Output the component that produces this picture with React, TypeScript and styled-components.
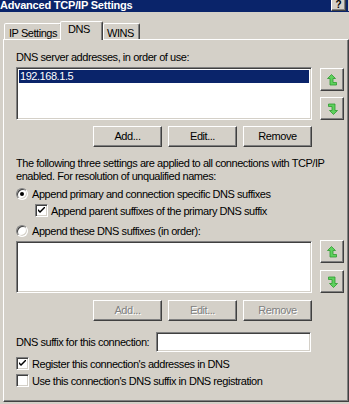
import React from 'react';
import styled, { createGlobalStyle, css } from 'styled-components';

const Global = createGlobalStyle`
  html, body { margin: 0; padding: 0; background: #d4d0c8; }
  body {
    font-family: "Liberation Sans", Arial, sans-serif;
    font-size: 11px;
    letter-spacing: -0.45px;
    color: #000;
  }
  * { box-sizing: border-box; }
`;

const Window = styled.div`
  width: 349px;
  height: 404px;
  overflow: hidden;
  background: #d4d0c8;
  display: flex;
  flex-direction: column;
`;

const TitleBar = styled.div`
  height: 12px;
  flex: none;
  background: #0a246a;
  display: flex;
  align-items: flex-start;
  overflow: hidden;
`;

const TitleText = styled.div`
  flex: 1;
  color: #fff;
  font-weight: bold;
  font-size: 11px;
  letter-spacing: -0.2px;
  line-height: 10px;
  white-space: nowrap;
`;

const HelpButton = styled.div`
  width: 15px;
  height: 11px;
  background: #d4d0c8;
  border-right: 1px solid #404040;
  border-bottom: 1px solid #404040;
  border-left: 1px solid #fff;
  box-shadow: inset -1px -1px #808080;
  font-weight: bold;
  font-size: 10px;
  line-height: 10px;
  text-align: center;
  letter-spacing: 0;
  margin-right: 2px;
`;

const CloseStub = styled.div`
  width: 1px;
  height: 11px;
  background: #d4d0c8;
`;

const TabStrip = styled.div`
  display: flex;
  align-items: flex-end;
  height: 18px;
  margin-top: 9px;
  padding-left: 4px;
  position: relative;
  z-index: 1;
  flex: none;
`;

const Tab = styled.div<{ $active?: boolean; $w: number; $pl: number; $ml?: number }>`
  width: ${p => p.$w}px;
  padding-left: ${p => p.$pl}px;
  margin-left: ${p => p.$ml ?? 0}px;
  background: #d4d0c8;
  border: 1px solid;
  border-bottom: none;
  border-color: #fff #404040 transparent #fff;
  box-shadow: inset -1px 0 #808080;
  border-radius: 2px 2px 0 0;
  white-space: nowrap;
  ${p =>
    p.$active
      ? css`
          height: 19px;
          margin-bottom: -1px;
          padding-top: 1px;
          line-height: 13px;
          position: relative;
          z-index: 2;
        `
      : css`
          height: 16px;
          padding-top: 2px;
          line-height: 14px;
        `}
`;

const Panel = styled.div`
  margin-left: 3px;
  width: 346px;
  height: 363px;
  flex: none;
  border: 1px solid;
  border-color: #fff #404040 #404040 #fff;
  box-shadow: inset -1px -1px #808080;
  padding-left: 12px;
  display: flex;
  flex-direction: column;
`;

const Text = styled.div<{ $mt: number }>`
  margin-top: ${p => p.$mt}px;
  line-height: 13px;
  white-space: nowrap;
`;

const Paragraph = styled.div<{ $mt: number }>`
  margin-top: ${p => p.$mt}px;
  line-height: 13px;
  width: 320px;
`;

const ListRow = styled.div<{ $mt: number }>`
  margin-top: ${p => p.$mt}px;
  display: flex;
  gap: 8px;
`;

const sunken = css`
  background: #fff;
  border: 1px solid;
  border-color: #808080 #fff #fff #808080;
  box-shadow: inset 1px 1px #404040, inset -1px -1px #d4d0c8;
`;

const ListBox = styled.div<{ $h: number; $mt?: number }>`
  ${sunken};
  width: 296px;
  height: ${p => p.$h}px;
  margin-top: ${p => p.$mt ?? 0}px;
  padding: 2px;
`;

const ListItem = styled.div<{ $selected?: boolean }>`
  height: 13px;
  line-height: 13px;
  padding-left: 1px;
  background: ${p => (p.$selected ? '#0a246a' : 'transparent')};
  color: ${p => (p.$selected ? '#fff' : '#000')};
`;

const ArrowColumn = styled.div<{ $pt: number; $gap: number }>`
  display: flex;
  flex-direction: column;
  padding-top: ${p => p.$pt}px;
  gap: ${p => p.$gap}px;
`;

const raised = css`
  background: #d4d0c8;
  border: 1px solid;
  border-color: #fff #404040 #404040 #fff;
  box-shadow: inset -1px -1px #808080;
`;

const ArrowButton = styled.div`
  ${raised};
  width: 24px;
  height: 23px;
  display: flex;
  align-items: center;
  justify-content: center;
`;

const ButtonRow = styled.div<{ $mt: number }>`
  margin-top: ${p => p.$mt}px;
  width: 296px;
  display: flex;
  justify-content: flex-end;
  gap: 6px;
`;

const Button = styled.div<{ $disabled?: boolean }>`
  ${raised};
  width: 69px;
  height: 21px;
  line-height: 18px;
  text-align: center;
  color: ${p => (p.$disabled ? '#808080' : '#000')};
  text-shadow: ${p => (p.$disabled ? '1px 1px #fff' : 'none')};
`;

const OptionRow = styled.div<{ $mt: number; $indent?: number }>`
  margin-top: ${p => p.$mt}px;
  margin-left: ${p => p.$indent ?? 0}px;
  height: 13px;
  display: flex;
  align-items: center;
  white-space: nowrap;
`;

const RadioCircle = styled.div<{ $checked?: boolean }>`
  width: 12px;
  height: 12px;
  border-radius: 50%;
  background: #fff;
  border: 1px solid;
  border-color: #808080 #fff #fff #808080;
  box-shadow: inset 1px 1px #404040, inset -1px -1px #d4d0c8;
  margin-right: 4px;
  display: flex;
  align-items: center;
  justify-content: center;
  flex: none;
  &::after {
    content: '';
    display: ${p => (p.$checked ? 'block' : 'none')};
    width: 4px;
    height: 4px;
    border-radius: 50%;
    background: #000;
  }
`;

const CheckBox = styled.div`
  ${sunken};
  width: 13px;
  height: 13px;
  margin-right: 3px;
  flex: none;
  display: flex;
  align-items: center;
  justify-content: center;
`;

const SuffixRow = styled.div<{ $mt: number }>`
  margin-top: ${p => p.$mt}px;
  width: 295px;
  display: flex;
  align-items: center;
  justify-content: space-between;
`;

const TextInput = styled.div`
  ${sunken};
  width: 155px;
  height: 20px;
`;

const ArrowIcon = ({ down }: { down?: boolean }) => (
  <svg
    width="11"
    height="12"
    viewBox="0 0 11 12"
    style={down ? { transform: 'rotate(180deg)' } : undefined}
  >
    <polygon
      points="4.5,0.5 8.5,4.5 6,4.5 6,8.5 9.5,8.5 9.5,11 3,11 3,4.5 0.5,4.5"
      fill="#5ed15e"
      stroke="#2f9a2f"
      strokeWidth="0.8"
      strokeLinejoin="miter"
    />
  </svg>
);

const CheckMark = () => (
  <svg width="7" height="7" viewBox="0 0 7 7">
    <path d="M0 2 L0 4 L2 6 L7 1 L7 -1 L2 4 Z" fill="#000" />
  </svg>
);

const Radio = ({ checked, label, mt }: { checked?: boolean; label: string; mt: number }) => (
  <OptionRow $mt={mt}>
    <RadioCircle $checked={checked} />
    {label}
  </OptionRow>
);

const Check = ({
  checked,
  label,
  mt,
  indent,
}: {
  checked?: boolean;
  label: string;
  mt: number;
  indent?: number;
}) => (
  <OptionRow $mt={mt} $indent={indent}>
    <CheckBox>{checked && <CheckMark />}</CheckBox>
    {label}
  </OptionRow>
);

const ArrowPair = ({ pt, gap }: { pt: number; gap: number }) => (
  <ArrowColumn $pt={pt} $gap={gap}>
    <ArrowButton>
      <ArrowIcon />
    </ArrowButton>
    <ArrowButton>
      <ArrowIcon down />
    </ArrowButton>
  </ArrowColumn>
);

export default function App() {
  return (
    <>
      <Global />
      <Window>
        <TitleBar>
          <TitleText>Advanced TCP/IP Settings</TitleText>
          <HelpButton>?</HelpButton>
          <CloseStub />
        </TitleBar>
        <TabStrip>
          <Tab $w={58} $pl={4}>IP Settings</Tab>
          <Tab $active $w={43} $pl={7} $ml={-2}>DNS</Tab>
          <Tab $w={37} $pl={3}>WINS</Tab>
        </TabStrip>
        <Panel>
          <Text $mt={11}>DNS server addresses, in order of use:</Text>
          <ListRow $mt={3}>
            <ListBox $h={53}>
              <ListItem $selected>192.168.1.5</ListItem>
            </ListBox>
            <ArrowPair pt={1} gap={6} />
          </ListRow>
          <ButtonRow $mt={6}>
            <Button>Add...</Button>
            <Button>Edit...</Button>
            <Button>Remove</Button>
          </ButtonRow>
          <Paragraph $mt={10}>
            The following three settings are applied to all connections with TCP/IP enabled. For
            resolution of unqualified names:
          </Paragraph>
          <Radio checked mt={4} label="Append primary and connection specific DNS suffixes" />
          <Check checked indent={19} mt={4} label="Append parent suffixes of the primary DNS suffix" />
          <Radio mt={7} label="Append these DNS suffixes (in order):" />
          <ListRow $mt={3}>
            <ListBox $h={52} $mt={1} />
            <ArrowPair pt={0} gap={7} />
          </ListRow>
          <ButtonRow $mt={7}>
            <Button $disabled>Add...</Button>
            <Button $disabled>Edit...</Button>
            <Button $disabled>Remove</Button>
          </ButtonRow>
          <SuffixRow $mt={11}>
            <span>DNS suffix for this connection:</span>
            <TextInput />
          </SuffixRow>
          <Check checked mt={5} label="Register this connection's addresses in DNS" />
          <Check mt={4} label="Use this connection's DNS suffix in DNS registration" />
        </Panel>
      </Window>
    </>
  );
}
